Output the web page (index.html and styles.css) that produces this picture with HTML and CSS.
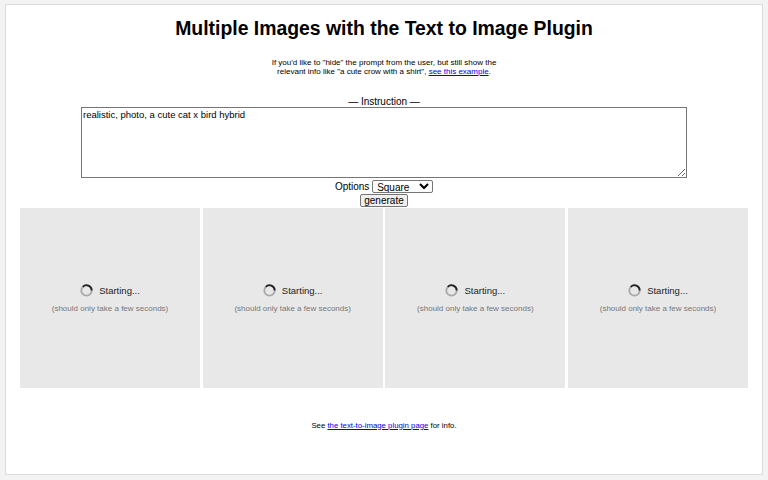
FILE: index.html
```html
<!DOCTYPE html>
<html>
<head>
<meta charset="utf-8">
<link rel="stylesheet" href="styles.css">
</head>
<body>
<div class="panel">
  <h1 class="title">Multiple Images with the Text to Image Plugin</h1>
  <p class="intro">If you'd like to "hide" the prompt from the user, but still show the<br>relevant info like "a cute crow with a shirt", <a href="#">see this example</a>.</p>
  <div class="label">— Instruction —</div>
  <textarea class="prompt">realistic, photo, a cute cat x bird hybrid</textarea>
  <div class="options">Options <select class="sel"><option>Square</option></select></div>
  <div class="gen-row"><button class="gen">generate</button></div>
  <div class="grid">
    <div class="cell"><div class="status"><svg class="spin" width="13" height="13" viewBox="0 0 13 13"><circle cx="6.5" cy="6.5" r="5.2" fill="none" stroke="#a8a8a8" stroke-width="1.8"/><path d="M2.8 2.8 A5.2 5.2 0 0 1 11.7 6.5" fill="none" stroke="#222" stroke-width="1.8"/></svg><span>Starting...</span></div><div class="sub">(should only take a few seconds)</div></div>
    <div class="cell"><div class="status"><svg class="spin" width="13" height="13" viewBox="0 0 13 13"><circle cx="6.5" cy="6.5" r="5.2" fill="none" stroke="#a8a8a8" stroke-width="1.8"/><path d="M2.8 2.8 A5.2 5.2 0 0 1 11.7 6.5" fill="none" stroke="#222" stroke-width="1.8"/></svg><span>Starting...</span></div><div class="sub">(should only take a few seconds)</div></div>
    <div class="cell"><div class="status"><svg class="spin" width="13" height="13" viewBox="0 0 13 13"><circle cx="6.5" cy="6.5" r="5.2" fill="none" stroke="#a8a8a8" stroke-width="1.8"/><path d="M2.8 2.8 A5.2 5.2 0 0 1 11.7 6.5" fill="none" stroke="#222" stroke-width="1.8"/></svg><span>Starting...</span></div><div class="sub">(should only take a few seconds)</div></div>
    <div class="cell"><div class="status"><svg class="spin" width="13" height="13" viewBox="0 0 13 13"><circle cx="6.5" cy="6.5" r="5.2" fill="none" stroke="#a8a8a8" stroke-width="1.8"/><path d="M2.8 2.8 A5.2 5.2 0 0 1 11.7 6.5" fill="none" stroke="#222" stroke-width="1.8"/></svg><span>Starting...</span></div><div class="sub">(should only take a few seconds)</div></div>
  </div>
  <p class="footer">See <a href="#">the text-to-image plugin page</a> for info.</p>
</div>
</body>
</html>
```
FILE: styles.css
```css
html, body {
  margin: 0;
  padding: 0;
  background: #f3f3f3;
}
body {
  padding: 4px 5px 4px 5px;
  font-family: "Liberation Sans", Arial, sans-serif;
  color: #000;
}
.panel {
  background: #fff;
  border: 1px solid #dcdcdc;
  box-sizing: border-box;
  height: 471px;
  text-align: center;
}
.title {
  margin: 12px 0 0;
  font-size: 19.4px;
  line-height: 23px;
  font-weight: bold;
}
.intro {
  margin: 18px 0 0;
  font-size: 8px;
  line-height: 9px;
}
a { color: #0000ee; }
.label {
  margin-top: 19.5px;
  font-size: 10px;
  line-height: 12px;
  height: 11px;
}
.prompt {
  display: block;
  margin: 0 auto;
  width: 606px;
  height: 71px;
  box-sizing: border-box;
  border: 1px solid #767676;
  padding: 1px 1px;
  font-family: "Liberation Sans", Arial, sans-serif;
  font-size: 9.5px;
  line-height: 11px;
  resize: vertical;
}
.options {
  margin-top: 2px;
  font-size: 10px;
  line-height: 14px;
  height: 14px;
}
.sel {
  width: 61px;
  height: 13px;
  font-size: 10px;
  font-family: "Liberation Sans", Arial, sans-serif;
  padding: 0;
  border: 1px solid #767676;
  border-radius: 2px;
  background: #fff;
  vertical-align: top;
}
.gen-row {
  height: 14px;
}
.gen {
  font-family: "Liberation Sans", Arial, sans-serif;
  font-size: 10px;
  height: 13px;
  padding: 0 3px;
  line-height: 11px;
  border: 1px solid #767676;
  border-radius: 2px;
  background: #efefef;
  vertical-align: top;
}
.grid {
  display: grid;
  grid-template-columns: repeat(4, 180px);
  gap: 2.67px;
  justify-content: center;
}
.cell {
  height: 180px;
  background: #e8e8e8;
  display: flex;
  flex-direction: column;
  align-items: center;
  justify-content: center;
  padding-top: 3px;
  box-sizing: border-box;
}
.status {
  display: flex;
  align-items: center;
  gap: 6px;
  font-size: 9.5px;
  line-height: 13px;
  color: #222;
}
.spin { display: block; }
.sub {
  margin-top: 6.5px;
  font-size: 8px;
  line-height: 10px;
  color: #777;
}
.footer {
  margin: 33px 0 0;
  font-size: 7.8px;
  line-height: 10px;
}
```
